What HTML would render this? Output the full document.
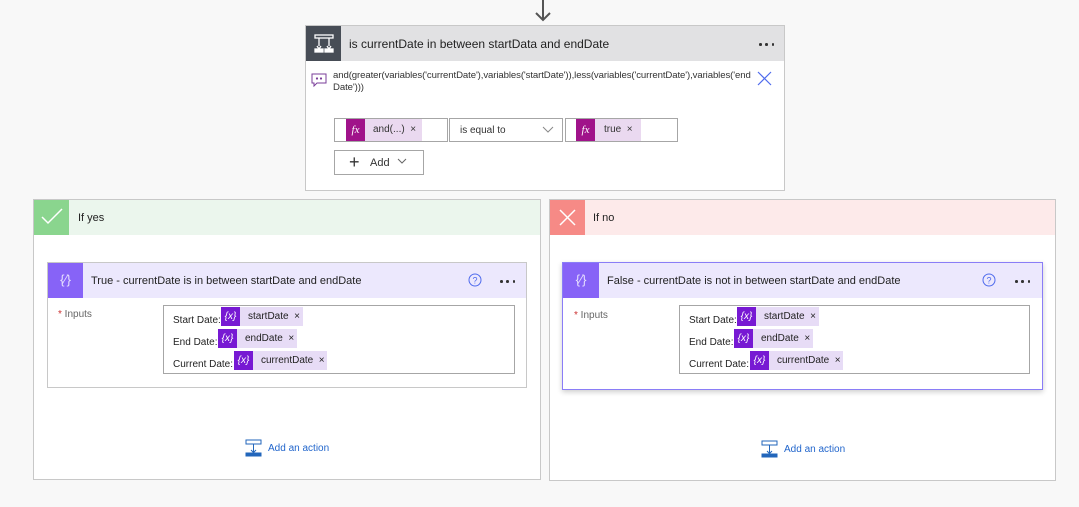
<!DOCTYPE html>
<html><head><meta charset="utf-8"><style>
*{box-sizing:border-box;margin:0;padding:0}
body{width:1079px;height:507px;background:#f8f8f8;font-family:"Segoe UI","Liberation Sans",sans-serif;position:relative;overflow:hidden;color:#333}
.a{position:absolute}
.dots{position:absolute;width:15px;height:3px;display:flex;justify-content:space-between}
.dots i{width:2.5px;height:2.5px;background:#333;border-radius:50%;display:block}
.tok{position:absolute;height:22px;background:#ead9f0;font-size:10px;line-height:22px;display:flex;align-items:center}
.tok .ic{width:19px;height:22px;background:#a0128a;color:#fff;font-family:"Liberation Serif",serif;font-style:italic;text-align:center;font-size:11px}
.vt{position:absolute;height:19px;background:#e7dcf6;font-size:10px;line-height:19px;display:flex;align-items:center;color:#222}
.vt .ic{width:19px;height:19px;background:#7719d3;color:#fff;text-align:center;font-size:10px;font-style:italic}
.lbl{position:absolute;font-size:10px;color:#222}
</style></head><body>
<div class="a" style="left:542px;top:0;width:2px;height:20px;background:#555"></div>
<svg class="a" style="left:535px;top:12px" width="16" height="10"><path d="M1 1 L8 8 L15 1" stroke="#555" stroke-width="2" fill="none"/></svg>

<div class="a" style="left:305px;top:25px;width:480px;height:166px;background:#fff;border:1px solid #c8c8c8"></div>
<div class="a" style="left:306px;top:26px;width:478px;height:35px;background:#e1e1e3"></div>
<div class="a" style="left:306px;top:26px;width:35px;height:35px;background:#474d56"></div>
<svg class="a" style="left:312px;top:32px" width="24" height="24" stroke="#fff" fill="none" stroke-width="1.3"><rect x="3" y="3" width="18" height="3"/><path d="M7 6v8M17 6v8M5 14l2 3 2-3M15 14l2 3 2-3"/><rect x="3" y="17" width="8" height="3" fill="#fff"/><rect x="13" y="17" width="8" height="3" fill="#fff"/></svg>
<div class="a" style="left:349px;top:37px;font-size:12px;color:#222">is currentDate in between startData and endDate</div>
<div class="dots" style="left:759px;top:43px"><i></i><i></i><i></i></div>
<svg class="a" style="left:311px;top:73px" width="16" height="14" stroke="#7a3d99" fill="none" stroke-width="1"><path d="M1 1h14v9H6l-3 3v-3H1z"/><circle cx="6" cy="5.5" r=".6" fill="#7a3d99"/><circle cx="10" cy="5.5" r=".6" fill="#7a3d99"/></svg>
<div class="a" style="left:333px;top:70px;width:421px;font-size:9.6px;line-height:12px;color:#333;word-break:break-all;letter-spacing:-0.1px">and(greater(variables('currentDate'),variables('startDate')),less(variables('currentDate'),variables('endDate')))</div>
<svg class="a" style="left:757px;top:71px" width="15" height="15" stroke="#4f6bed" stroke-width="1.2"><path d="M1 1L14 14M14 1L1 14"/></svg>
<div class="a" style="left:334px;top:118px;width:114px;height:24px;border:1px solid #a6a6a6"></div>
<div class="tok" style="left:346px;top:119px;width:76px"><div class="ic">fx</div><span style="margin-left:8px">and(...) &nbsp;×</span></div>
<div class="a" style="left:449px;top:118px;width:114px;height:24px;border:1px solid #a6a6a6;font-size:10px;padding:6px 10px">is equal to</div>
<svg class="a" style="left:542px;top:126px" width="12" height="8" stroke="#888" fill="none"><path d="M1 1l5 5 5-5"/></svg>
<div class="a" style="left:565px;top:118px;width:113px;height:24px;border:1px solid #a6a6a6"></div>
<div class="tok" style="left:576px;top:119px;width:65px"><div class="ic">fx</div><span style="margin-left:9px">true &nbsp;×</span></div>
<div class="a" style="left:334px;top:150px;width:90px;height:25px;border:1px solid #a6a6a6;background:#fff"></div>
<div class="a" style="left:349px;top:152px;font-size:18px;font-weight:300;color:#333">+</div>
<div class="a" style="left:370px;top:157px;font-size:11px;color:#333">Add</div>
<svg class="a" style="left:397px;top:158px" width="10" height="7" stroke="#666" fill="none"><path d="M1 1l4 4 4-4"/></svg>

<div class="a" style="left:33px;top:199px;width:508px;height:281px;background:#fff;border:1px solid #c8c8c8"></div>
<div class="a" style="left:34px;top:200px;width:506px;height:35px;background:#ebf6ed"></div>
<div class="a" style="left:34px;top:200px;width:35px;height:35px;background:#8ad58e"></div>
<svg class="a" style="left:41px;top:208px" width="22" height="18" stroke="#fff" fill="none" stroke-width="1.5"><path d="M1 9l6 6L21 1"/></svg>
<div class="a" style="left:78px;top:212px;font-size:11px;color:#222">If yes</div>
<div class="a" style="left:47px;top:262px;width:480px;height:126px;background:#fff;border:1px solid #c8c8c8"></div>
<div class="a" style="left:48px;top:263px;width:478px;height:35px;background:#ece8fd"></div>
<div class="a" style="left:48px;top:263px;width:35px;height:35px;background:#8763f7;color:#e6defe;font-size:13px;text-align:center;line-height:34px">{⁄}</div>
<div class="a" style="left:91px;top:275px;font-size:11px;color:#222">True - currentDate is in between startDate and endDate</div>
<svg class="a" style="left:468px;top:273px" width="14" height="14" stroke="#4f6bed" fill="none"><circle cx="7" cy="7" r="6"/><text x="7" y="10.5" font-size="9" fill="#4f6bed" stroke="none" text-anchor="middle" font-family="Liberation Sans">?</text></svg>
<div class="dots" style="left:500px;top:280px"><i></i><i></i><i></i></div>
<div class="lbl" style="left:58px;top:309px;color:#666"><span style="color:#c33">*</span> Inputs</div>
<div class="a" style="left:163px;top:305px;width:352px;height:69px;border:1px solid #a6a6a6"></div>
<div class="lbl" style="left:173px;top:315px">Start Date:</div>
<div class="vt" style="left:221px;top:307px;width:82px"><div class="ic">{x}</div><span style="margin-left:8px">startDate &nbsp;×</span></div>
<div class="lbl" style="left:173px;top:337px">End Date:</div>
<div class="vt" style="left:218px;top:329px;width:79px"><div class="ic">{x}</div><span style="margin-left:8px">endDate &nbsp;×</span></div>
<div class="lbl" style="left:173px;top:359px">Current Date:</div>
<div class="vt" style="left:234px;top:351px;width:93px"><div class="ic">{x}</div><span style="margin-left:8px">currentDate &nbsp;×</span></div>
<svg class="a" style="left:245px;top:439px" width="18" height="18" stroke="#2266bb" fill="none"><rect x="1" y="1" width="15" height="4"/><path d="M8.5 5v8M6 11l2.5 2.5L11 11"/><rect x="1" y="14" width="15" height="3" fill="#2266bb"/></svg>
<div class="a" style="left:268px;top:443px;font-size:10px;color:#2266cc">Add an action</div>

<div class="a" style="left:549px;top:199px;width:507px;height:282px;background:#fff;border:1px solid #c8c8c8"></div>
<div class="a" style="left:550px;top:200px;width:505px;height:35px;background:#fdeaea"></div>
<div class="a" style="left:550px;top:200px;width:35px;height:35px;background:#f68a86"></div>
<svg class="a" style="left:559px;top:209px" width="17" height="17" stroke="#fff" stroke-width="1.5"><path d="M1 1L16 16M16 1L1 16"/></svg>
<div class="a" style="left:593px;top:212px;font-size:11px;color:#222">If no</div>
<div class="a" style="left:562px;top:262px;width:481px;height:128px;background:#fff;border:1px solid #8a7df7;box-shadow:0 2px 5px rgba(0,0,0,.2)"></div>
<div class="a" style="left:563px;top:263px;width:479px;height:35px;background:#ece8fd"></div>
<div class="a" style="left:563px;top:263px;width:36px;height:35px;background:#8763f7;color:#e6defe;font-size:13px;text-align:center;line-height:34px">{⁄}</div>
<div class="a" style="left:607px;top:275px;font-size:11px;color:#222">False - currentDate is not in between startDate and endDate</div>
<svg class="a" style="left:982px;top:273px" width="14" height="14" stroke="#4f6bed" fill="none"><circle cx="7" cy="7" r="6"/><text x="7" y="10.5" font-size="9" fill="#4f6bed" stroke="none" text-anchor="middle" font-family="Liberation Sans">?</text></svg>
<div class="dots" style="left:1015px;top:280px"><i></i><i></i><i></i></div>
<div class="lbl" style="left:574px;top:310px;color:#666"><span style="color:#c33">*</span> Inputs</div>
<div class="a" style="left:679px;top:305px;width:351px;height:69px;border:1px solid #a6a6a6"></div>
<div class="lbl" style="left:689px;top:315px">Start Date:</div>
<div class="vt" style="left:737px;top:307px;width:82px"><div class="ic">{x}</div><span style="margin-left:8px">startDate &nbsp;×</span></div>
<div class="lbl" style="left:689px;top:337px">End Date:</div>
<div class="vt" style="left:734px;top:329px;width:79px"><div class="ic">{x}</div><span style="margin-left:8px">endDate &nbsp;×</span></div>
<div class="lbl" style="left:689px;top:359px">Current Date:</div>
<div class="vt" style="left:750px;top:351px;width:93px"><div class="ic">{x}</div><span style="margin-left:8px">currentDate &nbsp;×</span></div>
<svg class="a" style="left:761px;top:440px" width="18" height="18" stroke="#2266bb" fill="none"><rect x="1" y="1" width="15" height="4"/><path d="M8.5 5v8M6 11l2.5 2.5L11 11"/><rect x="1" y="14" width="15" height="3" fill="#2266bb"/></svg>
<div class="a" style="left:784px;top:444px;font-size:10px;color:#2266cc">Add an action</div>
</body></html>
